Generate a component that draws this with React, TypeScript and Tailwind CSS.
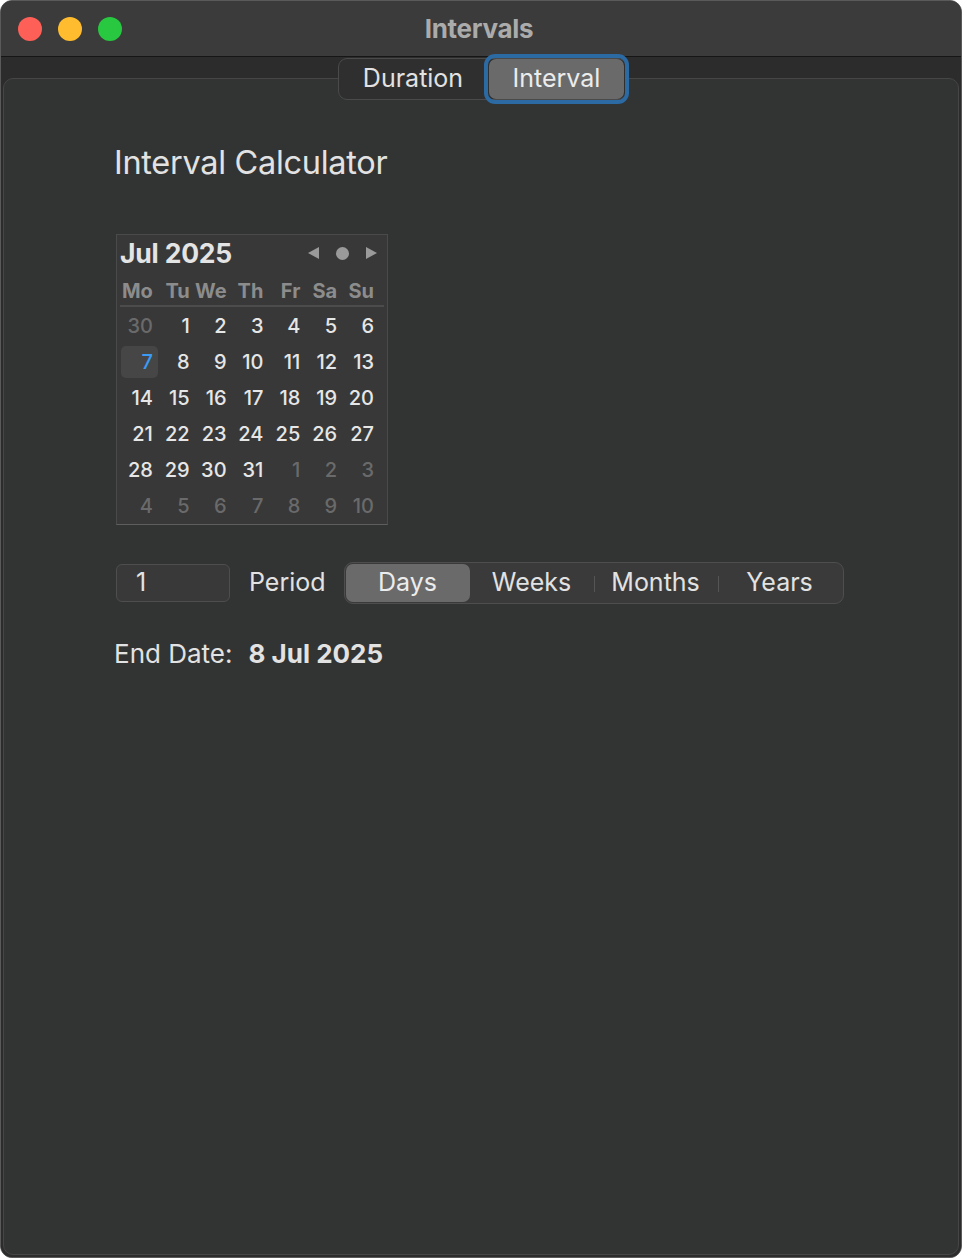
import React from "react";

const font = { fontFamily: "Inter, 'Noto Sans', sans-serif" };

const dayNames = ["Mo", "Tu", "We", "Th", "Fr", "Sa", "Su"];

type Day = { n: number; muted?: boolean; today?: boolean };

const weeks: Day[][] = [
  [{ n: 30, muted: true }, { n: 1 }, { n: 2 }, { n: 3 }, { n: 4 }, { n: 5 }, { n: 6 }],
  [{ n: 7, today: true }, { n: 8 }, { n: 9 }, { n: 10 }, { n: 11 }, { n: 12 }, { n: 13 }],
  [{ n: 14 }, { n: 15 }, { n: 16 }, { n: 17 }, { n: 18 }, { n: 19 }, { n: 20 }],
  [{ n: 21 }, { n: 22 }, { n: 23 }, { n: 24 }, { n: 25 }, { n: 26 }, { n: 27 }],
  [{ n: 28 }, { n: 29 }, { n: 30 }, { n: 31 }, { n: 1, muted: true }, { n: 2, muted: true }, { n: 3, muted: true }],
  [4, 5, 6, 7, 8, 9, 10].map((n) => ({ n, muted: true })),
];

function TrafficLights() {
  return (
    <div className="flex items-center gap-[16px] pl-[17px]">
      <span className="w-[24px] h-[24px] rounded-full bg-[#fe5f57]" />
      <span className="w-[24px] h-[24px] rounded-full bg-[#febc2e]" />
      <span className="w-[24px] h-[24px] rounded-full bg-[#28c840]" />
    </div>
  );
}

function Calendar() {
  return (
    <div className="w-[272px] h-[291px] bg-[#383838] border border-[#4a4a4a] border-b-[#5e5e5e] flex flex-col">
      <div className="h-[36px] shrink-0 flex items-center justify-between pl-[3px] pr-[10px]">
        <span className="text-[26.5px] font-bold text-[#e4e4e4] leading-none tracking-[-0.2px]">Jul 2025</span>
        <div className="flex items-center gap-[17px]">
          <svg width="11" height="12" viewBox="0 0 11 12">
            <path d="M0 6 L11 0 L11 12 Z" fill="#9a9a9a" />
          </svg>
          <span className="w-[13px] h-[13px] rounded-full bg-[#9a9a9a]" />
          <svg width="11" height="12" viewBox="0 0 11 12">
            <path d="M11 6 L0 0 L0 12 Z" fill="#9a9a9a" />
          </svg>
        </div>
      </div>
      <div className="mx-[3px] border-b-2 border-[#4c4c4c]">
        <div className="grid grid-cols-7 w-[258px] ml-[1px] h-[34px] pt-[5px] items-center">
          {dayNames.map((d) => (
            <span key={d} className="text-right pr-[5px] text-[20px] font-bold text-[#8c8c8c] leading-none">
              {d}
            </span>
          ))}
        </div>
      </div>
      <div className="grid grid-cols-7 w-[258px] ml-[4px] mt-[1px]">
        {weeks.flat().map((d, i) => (
          <div key={i} className="h-[36px] flex items-center">
            <span
              className={
                "w-full h-[32px] flex items-center justify-end pr-[5px] text-[20px] font-medium leading-none rounded-[5px] " +
                (d.today
                  ? "bg-[#464646] text-[#3a9cf5]"
                  : d.muted
                  ? "text-[#6a6a6a]"
                  : "text-[#e6e6e6]")
              }
            >
              {d.n}
            </span>
          </div>
        ))}
      </div>
    </div>
  );
}

export default function App() {
  const periods = ["Days", "Weeks", "Months", "Years"];
  return (
    <div className="w-[962px] h-[1258px] bg-white" style={font}>
      <div className="w-[962px] h-[1258px] rounded-[12px] overflow-hidden border border-[#5a5a5a] flex flex-col bg-[#2b2b2b]">
        {/* title bar */}
        <div className="h-[56px] shrink-0 bg-[#3b3b3b] border-b border-[#161616] relative flex items-center">
          <TrafficLights />
          <div className="absolute inset-0 flex items-center justify-center">
            <span className="text-[26px] font-bold text-[#ababab] tracking-[-0.3px] ml-[-4px]">Intervals</span>
          </div>
        </div>

        {/* body */}
        <div className="flex-1 flex flex-col px-[2px] pb-[2px] bg-[#2c2c2c]">
          <div className="relative z-10 flex pl-[335px] mt-[1px]">
            <div className="flex items-center h-[42px] rounded-[9px] bg-[#2f2f2f] border border-[#4a4a4a]">
              <div className="w-[148px] h-full flex items-center justify-center text-[25px] text-[#e2e2e2]">
                Duration
              </div>
              <div className="w-[145px] h-[50px] -my-[4px] ml-[-3px] mr-[-3px] rounded-[11px] border-[4px] border-[#2b6aa3] p-[1px]">
                <div className="w-full h-full rounded-[7px] bg-[#6a6a6a] flex items-center justify-center text-[25px] text-[#ececec]">
                  Interval
                </div>
              </div>
            </div>
          </div>

          <div className="-mt-[22px] flex-1 rounded-[10px] bg-[#323333] border border-[#464646] pl-[110px] pt-[64px]">
            <h1 className="text-[32.5px] leading-[40px] font-normal text-[#e2e2e2] tracking-[-0.3px]">Interval Calculator</h1>

            <div className="mt-[51px] ml-[2px]">
              <Calendar />
            </div>

            <div className="mt-[37px] flex items-center ml-[2px]">
              <div className="w-[114px] h-[38px] rounded-[6px] bg-[#393939] border border-[#4e4e4e] flex items-center pl-[19px] text-[25px] text-[#e4e4e4]">
                1
              </div>
              <span className="ml-[19px] text-[25px] text-[#e2e2e2]">Period</span>
              <div className="ml-[18px] w-[500px] h-[42px] rounded-[9px] bg-[#3a3a3a] border border-[#4e4e4e] flex items-center p-[1px]">
                {periods.map((p, i) => (
                  <div key={p} className="flex-1 h-full relative flex items-center justify-center">
                    {i > 1 && <span className="absolute left-0 top-[12px] h-[16px] w-px bg-[#555555]" />}
                    <div
                      className={
                        "w-full h-full flex items-center justify-center text-[25px] rounded-[7px] " +
                        (i === 0 ? "bg-[#6a6a6a] text-[#ececec]" : "text-[#e2e2e2]")
                      }
                    >
                      {p}
                    </div>
                  </div>
                ))}
              </div>
            </div>

            <div className="mt-[30px] flex items-center text-[26px] text-[#e2e2e2]">
              <span>End Date:</span>
              <span className="ml-[16px] font-bold">8 Jul 2025</span>
            </div>
          </div>
        </div>
      </div>
    </div>
  );
}
